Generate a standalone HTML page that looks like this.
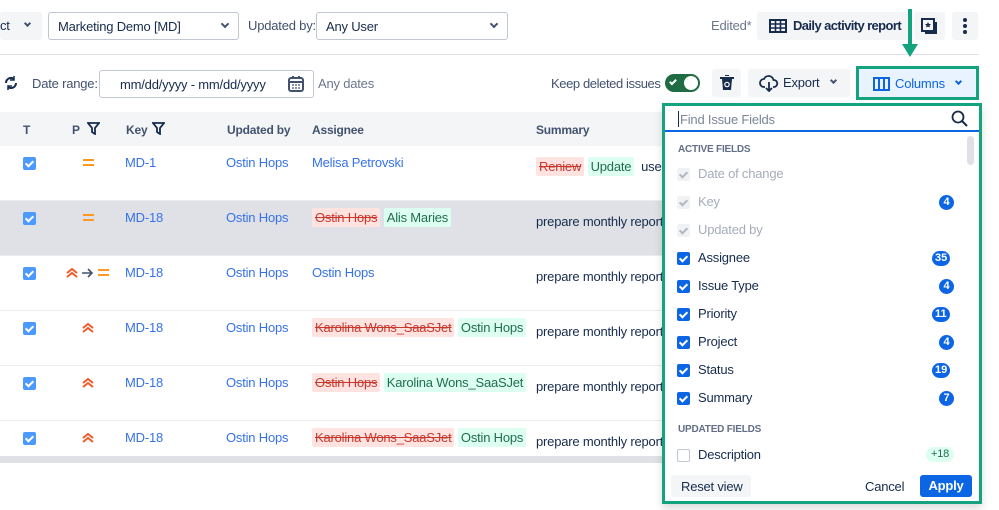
<!DOCTYPE html>
<html><head><meta charset="utf-8"><style>
*{box-sizing:border-box;margin:0;padding:0}
body{width:999px;height:510px;overflow:hidden;background:#fff;font-family:"Liberation Sans",sans-serif;font-size:13px;letter-spacing:-0.2px;color:#172b4d;position:relative}
.a{position:absolute;white-space:nowrap}
.sel{position:absolute;border:1px solid #c1c7d0;border-radius:3px;background:#fff;height:28px;padding:6px 9px;font-size:13px;color:#172b4d;white-space:nowrap}
.chev{position:absolute;right:10px;top:8px;width:6px;height:6px;border-right:2px solid #42526e;border-bottom:2px solid #42526e;transform:rotate(45deg)}
.btn{position:absolute;background:#f4f5f7;border-radius:3px;height:28px}
.cb{position:absolute;width:13px;height:13px;background:#4c9aff;border-radius:2px}
.cb:after{content:"";position:absolute;left:4px;top:2px;width:3px;height:6px;border-right:2px solid #fff;border-bottom:2px solid #fff;transform:rotate(45deg)}
.lnk{color:#3572e8}
.del{background:#ffe3e1;color:#c9372c;text-decoration:line-through;padding:2px 3px;border-radius:2px}
.add{background:#dcfff1;color:#216e4e;padding:2px 3px;border-radius:2px}
.row{position:absolute;left:0;width:663px;height:55px;border-bottom:1px solid #ebecf0}
.it{position:absolute;left:677px;font-size:13px}
.it .c{position:absolute;left:0;top:2px;width:13px;height:13px;border-radius:2px;background:#0c66e4}
.it .c:after{content:"";position:absolute;left:4px;top:2px;width:3px;height:6px;border-right:2px solid #fff;border-bottom:2px solid #fff;transform:rotate(45deg)}
.it.dis{color:#a5adba}.it.dis .c{background:#f1f2f4}.it.dis .c:after{border-color:#b3b9c4}
.it span.t{position:absolute;left:21px;top:0;white-space:nowrap}
.bd{position:absolute;background:#0c66e4;color:#fff;font-size:11px;font-weight:bold;border-radius:8px;height:15px;line-height:15px;text-align:center;min-width:15px;padding:0 3px;letter-spacing:0}
.eq{position:absolute;width:11px;height:7px;border-top:2px solid #ff991f;border-bottom:2px solid #ff991f}
</style></head><body>

<div class="btn" style="left:0;top:12px;width:42px;"><span class="a" style="left:0;top:6px">ct</span><div class="chev" style="right:12px;top:9px;width:5px;height:5px"></div></div>
<div class="sel" style="left:48px;top:12px;width:191px">Marketing Demo [MD]<div class="chev"></div></div>
<span class="a" style="left:248px;top:18px;color:#42526e">Updated by:</span>
<div class="sel" style="left:316px;top:12px;width:192px">Any User<div class="chev"></div></div>
<span class="a" style="left:711px;top:18px;color:#6b778c">Edited*</span>
<div class="btn" style="left:757px;top:12px;width:153px"><svg class="a" style="left:12px;top:7px" width="18" height="14"><rect x="1" y="1" width="16" height="12" fill="none" stroke="#172b4d" stroke-width="2"/><path d="M1 5h16M1 9h16M6.5 1v12M11.5 1v12" stroke="#172b4d" stroke-width="1.6"/></svg><span class="a" style="left:36px;top:6px;font-weight:bold;letter-spacing:-0.6px">Daily activity report</span></div>
<div class="btn" style="left:914px;top:12px;width:31px"><svg class="a" style="left:7px;top:6px" width="18" height="17"><rect x="1" y="1" width="12" height="12" fill="none" stroke="#172b4d" stroke-width="2"/><path d="M4 15h11V4" fill="none" stroke="#172b4d" stroke-width="2"/><path d="M7 4l1 2h2l-1.5 1.5.5 2-2-1-2 1 .5-2L4 6h2z" fill="#172b4d"/></svg></div>
<div class="btn" style="left:952px;top:12px;width:26px"><div class="a" style="left:11px;top:6px;width:4px;height:4px;border-radius:2px;background:#172b4d;box-shadow:0 6px 0 #172b4d,0 12px 0 #172b4d"></div></div>
<div class="a" style="left:0;top:54px;width:979px;height:1px;background:#dfe1e6"></div>

<div class="a" style="left:908px;top:9px;width:4px;height:37px;background:#14a37f"></div>
<div class="a" style="left:902px;top:44px;width:0;height:0;border-left:8px solid transparent;border-right:8px solid transparent;border-top:13px solid #14a37f"></div>

<svg class="a" style="left:3px;top:75px" width="16" height="16"><path d="M3 8a5 5 0 0 1 8-4M13 8a5 5 0 0 1-8 4" fill="none" stroke="#172b4d" stroke-width="2"/><path d="M11 1v4H7M5 15v-4h4" fill="none" stroke="#172b4d" stroke-width="1.5"/></svg>
<span class="a" style="left:32px;top:76px;color:#42526e">Date range:</span>
<div class="sel" style="left:99px;top:70px;width:215px;padding-left:20px">mm/dd/yyyy - mm/dd/yyyy
<svg class="a" style="left:188px;top:5px" width="16" height="16"><rect x="1" y="2" width="14" height="13" rx="2" fill="none" stroke="#42526e" stroke-width="2"/><path d="M1 6h14" stroke="#42526e" stroke-width="2"/><path d="M5 0v3M11 0v3" stroke="#42526e" stroke-width="2"/><path d="M4 9h2M7 9h2M10 9h2M4 12h2M7 12h2M10 12h2" stroke="#42526e" stroke-width="1.3"/></svg></div>
<span class="a" style="left:318px;top:76px;color:#6b778c">Any dates</span>
<span class="a" style="left:551px;top:76px;color:#42526e;letter-spacing:-0.4px">Keep deleted issues</span>
<div class="a" style="left:665px;top:74px;width:35px;height:18px;border-radius:9px;background:#1f6b43"><div class="a" style="left:19px;top:2px;width:14px;height:14px;border-radius:7px;background:#fff"></div><div class="a" style="left:6px;top:4px;width:4px;height:7px;border-right:2px solid #fff;border-bottom:2px solid #fff;transform:rotate(45deg)"></div></div>
<div class="btn" style="left:712px;top:69px;width:29px"><svg class="a" style="left:8px;top:6px" width="14" height="16"><path d="M0 3h14M5 0h4" stroke="#172b4d" stroke-width="2"/><path d="M2 4h10l-1 11H3z" fill="#172b4d"/><circle cx="7" cy="9.5" r="2.2" fill="none" stroke="#fff" stroke-width="1.2"/></svg></div>
<div class="btn" style="left:748px;top:69px;width:102px"><svg class="a" style="left:11px;top:6px" width="20" height="17"><path d="M6 12H5a4 4 0 0 1 0-8 5 5 0 0 1 9.5 1A3.5 3.5 0 0 1 15 12h-1" fill="none" stroke="#172b4d" stroke-width="1.8"/><path d="M10 7v9M7 13l3 3 3-3" fill="none" stroke="#172b4d" stroke-width="1.8"/></svg><span class="a" style="left:35px;top:6px">Export</span><div class="chev" style="right:14px;top:9px;width:5px;height:5px"></div></div>
<div class="a" style="left:856px;top:66px;width:123px;height:34px;border:3px solid #14a37f;background:#e9f2ff"><svg class="a" style="left:14px;top:8px" width="17" height="14"><rect x="1" y="1" width="15" height="12" fill="none" stroke="#0c66e4" stroke-width="2"/><path d="M6 1v12M11 1v12" stroke="#0c66e4" stroke-width="2"/></svg><span class="a" style="left:36px;top:7px;color:#0c66e4">Columns</span><div class="chev" style="right:15px;top:10px;width:5px;height:5px;border-color:#0c66e4"></div></div>

<div class="a" style="left:0;top:112px;width:663px;height:34px;background:#f4f5f7;font-weight:bold;font-size:12px;color:#42526e">
<span class="a" style="left:23px;top:11px">T</span><span class="a" style="left:72px;top:11px">P</span>
<svg class="a" style="left:87px;top:10px" width="13" height="13"><path d="M1 1h11L8 6v6L5 10V6z" fill="none" stroke="#172b4d" stroke-width="1.8"/></svg>
<span class="a" style="left:126px;top:11px">Key</span>
<svg class="a" style="left:152px;top:10px" width="13" height="13"><path d="M1 1h11L8 6v6L5 10V6z" fill="none" stroke="#172b4d" stroke-width="1.8"/></svg>
<span class="a" style="left:227px;top:11px">Updated by</span><span class="a" style="left:312px;top:11px">Assignee</span><span class="a" style="left:536px;top:11px">Summary</span></div>

<div class="row" style="top:146px"><div class="cb" style="left:23px;top:11px"></div><div class="eq" style="left:83px;top:13px"></div><span class="a lnk" style="left:125px;top:9px">MD-1</span><span class="a lnk" style="left:226px;top:9px">Ostin Hops</span><span class="a lnk" style="left:312px;top:9px">Melisa Petrovski</span><span class="a" style="left:536px;top:13px"><span class="del">Reniew</span> <span class="add">Update</span> &nbsp;user</span></div>
<div class="row" style="top:201px;background:#dfe1e6"><div class="cb" style="left:23px;top:11px"></div><div class="eq" style="left:83px;top:13px"></div><span class="a lnk" style="left:125px;top:9px">MD-18</span><span class="a lnk" style="left:226px;top:9px">Ostin Hops</span><span class="a" style="left:312px;top:9px"><span class="del">Ostin Hops</span> <span class="add">Alis Maries</span></span><span class="a" style="left:536px;top:13px">prepare monthly report</span></div>
<div class="row" style="top:256px"><div class="cb" style="left:23px;top:11px"></div><svg class="a" style="left:66px;top:11px" width="12" height="12"><path d="M1 6l5-4 5 4M1 10l5-4 5 4" fill="none" stroke="#f15b2a" stroke-width="2"/></svg><svg class="a" style="left:81px;top:11px" width="13" height="12"><path d="M1 6h10M7 2l4 4-4 4" fill="none" stroke="#42526e" stroke-width="1.6"/></svg><div class="eq" style="left:98px;top:13px"></div><span class="a lnk" style="left:125px;top:9px">MD-18</span><span class="a lnk" style="left:226px;top:9px">Ostin Hops</span><span class="a lnk" style="left:312px;top:9px">Ostin Hops</span><span class="a" style="left:536px;top:13px">prepare monthly report</span></div>
<div class="row" style="top:311px"><div class="cb" style="left:23px;top:11px"></div><svg class="a" style="left:82px;top:11px" width="12" height="12"><path d="M1 6l5-4 5 4M1 10l5-4 5 4" fill="none" stroke="#f15b2a" stroke-width="2"/></svg><span class="a lnk" style="left:125px;top:9px">MD-18</span><span class="a lnk" style="left:226px;top:9px">Ostin Hops</span><span class="a" style="left:312px;top:9px"><span class="del">Karolina Wons_SaaSJet</span> <span class="add">Ostin Hops</span></span><span class="a" style="left:536px;top:13px">prepare monthly report</span></div>
<div class="row" style="top:366px"><div class="cb" style="left:23px;top:11px"></div><svg class="a" style="left:82px;top:11px" width="12" height="12"><path d="M1 6l5-4 5 4M1 10l5-4 5 4" fill="none" stroke="#f15b2a" stroke-width="2"/></svg><span class="a lnk" style="left:125px;top:9px">MD-18</span><span class="a lnk" style="left:226px;top:9px">Ostin Hops</span><span class="a" style="left:312px;top:9px"><span class="del">Ostin Hops</span> <span class="add">Karolina Wons_SaaSJet</span></span><span class="a" style="left:536px;top:13px">prepare monthly report</span></div>
<div class="row" style="top:421px;height:35px;border:none"><div class="cb" style="left:23px;top:11px"></div><svg class="a" style="left:82px;top:11px" width="12" height="12"><path d="M1 6l5-4 5 4M1 10l5-4 5 4" fill="none" stroke="#f15b2a" stroke-width="2"/></svg><span class="a lnk" style="left:125px;top:9px">MD-18</span><span class="a lnk" style="left:226px;top:9px">Ostin Hops</span><span class="a" style="left:312px;top:9px"><span class="del">Karolina Wons_SaaSJet</span> <span class="add">Ostin Hops</span></span><span class="a" style="left:536px;top:13px">prepare monthly report</span></div>
<div class="a" style="left:0;top:456px;width:663px;height:7px;background:#dfe1e6"></div>

<div class="a" style="left:662px;top:103px;width:320px;height:401px;border:3px solid #14a37f;background:#fff;box-shadow:0 4px 8px rgba(0,0,0,.15)"></div>
<div class="a" style="left:665px;top:106px;width:314px;height:26px;border-bottom:2px solid #0c66e4"></div>
<div class="a" style="left:678px;top:111px;width:1px;height:16px;background:#172b4d"></div>
<span class="a" style="left:680px;top:112px;color:#7a869a">Find Issue Fields</span>
<svg class="a" style="left:951px;top:110px" width="17" height="17"><circle cx="7" cy="7" r="5.5" fill="none" stroke="#172b4d" stroke-width="1.8"/><path d="M11 11l5 5" stroke="#172b4d" stroke-width="2"/></svg>
<div class="a" style="left:967px;top:136px;width:7px;height:29px;border-radius:4px;background:#dfe1e6"></div>
<span class="a" style="left:678px;top:144px;font-size:10px;font-weight:bold;color:#626f86">ACTIVE FIELDS</span>
<div class="it dis" style="top:166px"><div class="c"></div><span class="t">Date of change</span></div>
<div class="it dis" style="top:194px"><div class="c"></div><span class="t">Key</span></div><div class="bd" style="left:939px;top:195px">4</div>
<div class="it dis" style="top:222px"><div class="c"></div><span class="t">Updated by</span></div>
<div class="it" style="top:250px"><div class="c"></div><span class="t">Assignee</span></div><div class="bd" style="left:932px;top:251px">35</div>
<div class="it" style="top:278px"><div class="c"></div><span class="t">Issue Type</span></div><div class="bd" style="left:939px;top:279px">4</div>
<div class="it" style="top:306px"><div class="c"></div><span class="t">Priority</span></div><div class="bd" style="left:932px;top:307px">11</div>
<div class="it" style="top:334px"><div class="c"></div><span class="t">Project</span></div><div class="bd" style="left:939px;top:335px">4</div>
<div class="it" style="top:362px"><div class="c"></div><span class="t">Status</span></div><div class="bd" style="left:932px;top:363px">19</div>
<div class="it" style="top:390px"><div class="c"></div><span class="t">Summary</span></div><div class="bd" style="left:939px;top:391px">7</div>
<span class="a" style="left:678px;top:424px;font-size:10px;font-weight:bold;color:#626f86">UPDATED FIELDS</span>
<div class="it" style="top:447px"><div class="c" style="background:#fff;border:1px solid #c1c7d0"></div><span class="t">Description</span></div>
<div class="a" style="left:926px;top:447px;width:28px;height:15px;border-radius:8px;background:#dcfff1;color:#216e4e;font-size:11px;text-align:center;line-height:15px">+18</div>
<div class="btn" style="left:671px;top:475px;width:80px;height:22px"><span class="a" style="left:10px;top:4px">Reset view</span></div>
<span class="a" style="left:865px;top:479px">Cancel</span>
<div class="a" style="left:920px;top:475px;width:52px;height:22px;background:#0c66e4;border-radius:3px;color:#fff;font-weight:bold;text-align:center;line-height:22px">Apply</div>
</body></html>
